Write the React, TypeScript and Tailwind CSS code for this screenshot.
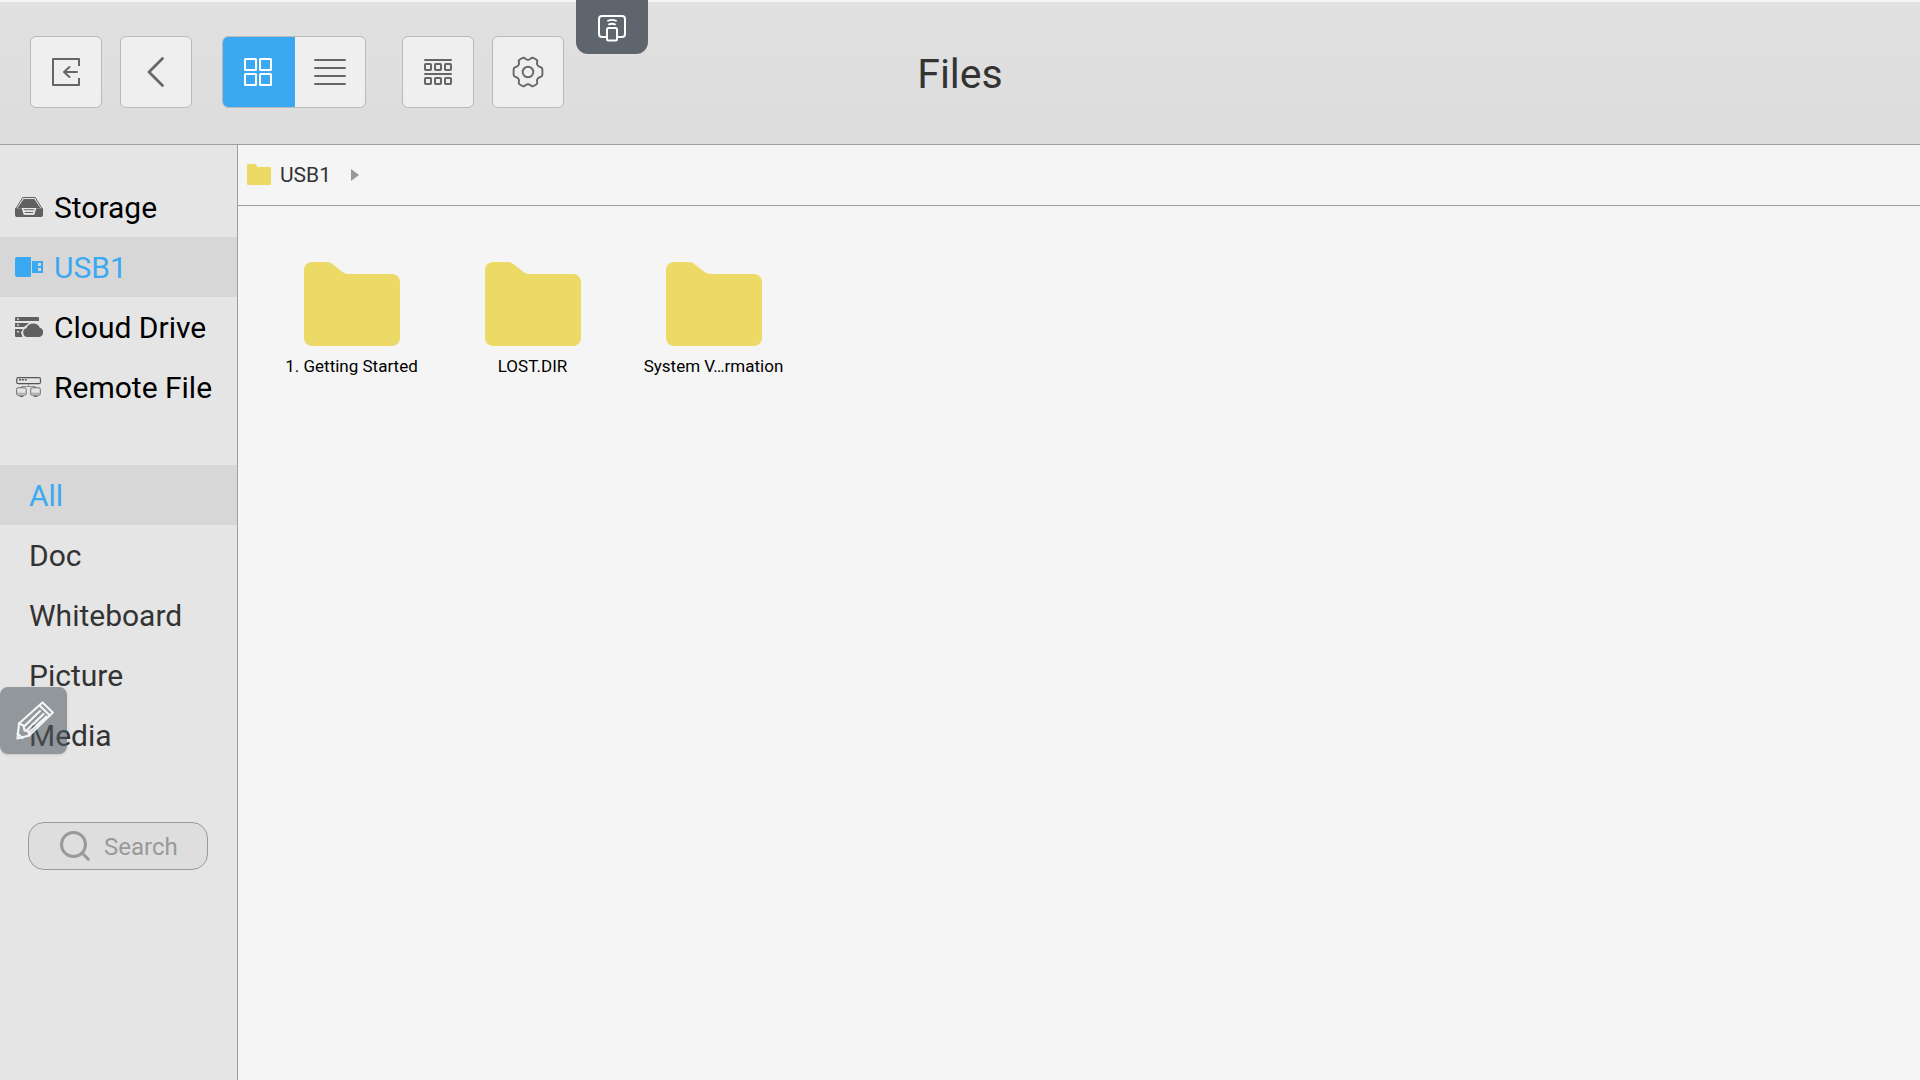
import React, { useState } from "react";

const toolButton =
  "flex size-[72px] items-center justify-center rounded-md border border-[#bababa] bg-[#efefef] text-[#666666]";

function ExitIcon() {
  return (
    <svg width="30" height="30" viewBox="0 0 30 30" fill="none" stroke="currentColor" strokeWidth="2" strokeLinecap="round" strokeLinejoin="round" aria-hidden="true">
      <path d="M28 9V2H2v26h26v-7" strokeLinecap="butt" />
      <path d="M26 15H13M18.500 10L13 15l5.500 5" />
    </svg>
  );
}

function BackIcon() {
  return (
    <svg width="18" height="32" viewBox="0 0 18 32" fill="none" stroke="currentColor" strokeWidth="2.800" strokeLinecap="round" strokeLinejoin="round" aria-hidden="true">
      <path d="M15.500 2.500L2 16 15.500 29.500" />
    </svg>
  );
}

function GridIcon() {
  return (
    <svg width="28" height="28" viewBox="0 0 28 28" fill="none" stroke="currentColor" strokeWidth="2" aria-hidden="true">
      <rect x="1" y="1" width="11" height="11" rx="0.500" />
      <rect x="16" y="1" width="11" height="11" rx="0.500" />
      <rect x="1" y="16" width="11" height="11" rx="0.500" />
      <rect x="16" y="16" width="11" height="11" rx="0.500" />
    </svg>
  );
}

function ListIcon() {
  return (
    <svg width="32" height="26" viewBox="0 0 32 26" fill="currentColor" aria-hidden="true">
      <rect y="0" width="32" height="2" rx="1" />
      <rect y="8" width="32" height="2" rx="1" />
      <rect y="16" width="32" height="2" rx="1" />
      <rect y="24" width="32" height="2" rx="1" />
    </svg>
  );
}

function GroupIcon() {
  return (
    <svg width="28" height="26" viewBox="0 0 28 26" fill="none" stroke="currentColor" strokeWidth="2" aria-hidden="true">
      <path d="M1 1h26M1 15h26" strokeLinecap="round" />
      {[5, 19].map((y) =>
        [1, 11, 21].map((x) => <rect key={`${x}-${y}`} x={x} y={y} width="6" height="6" rx="0.800" />),
      )}
    </svg>
  );
}

function GearIcon() {
  return (
    <svg width="32" height="32" viewBox="0 0 32 32" fill="none" stroke="currentColor" strokeWidth="1.900" strokeLinejoin="round" aria-hidden="true">
      <circle cx="16" cy="16" r="5.300" />
      <path d="M13.300 2.600C14.200 4.200 17.800 4.200 18.700 2.600Q20.100 1 22 2.200L24.200 3.500Q25.800 4.500 25.100 6.200C24.500 8 26 10.800 28.300 11Q30.100 11.400 30.400 13.200V18.800Q30.100 20.600 28.300 21C26 21.200 24.500 24 25.100 25.800Q25.800 27.500 24.200 28.500L22 29.800Q20.100 31 18.700 29.400C17.800 27.800 14.200 27.800 13.300 29.400Q11.900 31 10 29.800L7.800 28.500Q6.200 27.500 6.900 25.800C7.500 24 6 21.200 3.700 21Q1.900 20.600 1.600 18.800V13.200Q1.900 11.400 3.700 11C6 10.800 7.500 8 6.900 6.200Q6.200 4.500 7.800 3.500L10 2.200Q11.900 1 13.300 2.600Z" />
    </svg>
  );
}

function CastIcon() {
  return (
    <svg width="28" height="27" viewBox="0 0 28 27" fill="none" stroke="white" strokeWidth="2" strokeLinecap="round" aria-hidden="true">
      <path d="M8 22H4a3 3 0 0 1-3-3V4a3 3 0 0 1 3-3h20a3 3 0 0 1 3 3v15a3 3 0 0 1-3 3h-4" />
      <path d="M10 5.700Q14 3.900 18 5.700M11 9.400Q14 8.100 17 9.400" strokeWidth="1.800" />
      <rect x="9" y="13" width="10" height="12.500" rx="1.500" />
    </svg>
  );
}

function StorageIcon() {
  return (
    <svg width="28" height="20" viewBox="0 0 28 20" aria-hidden="true">
      <path d="M7.700 0.500h12.600L27.300 12M7.700 0.500L0.700 12" fill="none" stroke="#606060" strokeWidth="1" />
      <path d="M8.600 2h10.800l6 9H2.600z" fill="#606060" />
      <path d="M0 11.200h6.700l2 6.600h10.600l2-6.600H28V18a2 2 0 0 1-2 2H2a2 2 0 0 1-2-2z" fill="#606060" />
      <path d="M7.200 11.200h13.600l-2 6.300H9.200z" fill="#ececec" />
      <path d="M8.700 12.700h10.600M9.700 15.500h8.600" stroke="#606060" strokeWidth="1.100" />
    </svg>
  );
}

function UsbIcon() {
  return (
    <svg width="28" height="20" viewBox="0 0 28 20" fill="#3ba9f1" aria-hidden="true">
      <path d="M2 0h14v20H2a2 2 0 0 1-2-2V2a2 2 0 0 1 2-2z" />
      <path fillRule="evenodd" d="M17 4h11v12H17zM23 6v3h3V6zM23 11v3h3v-3z" />
    </svg>
  );
}

function CloudDriveIcon() {
  return (
    <svg width="28" height="20" viewBox="0 0 28 20" fill="#606060" aria-hidden="true">
      <path fillRule="evenodd" d="M1 0h22q1 0 1 1v3H0V1q0-1 1-1zM2 1.300v1.400h1.800V1.300z" />
      <path fillRule="evenodd" d="M0 6h14l-3 2.500L9 10H0zM2 7.300v1.400h1.800V7.300z" />
      <path fillRule="evenodd" d="M0 12h8L6 15.500 7.500 20H1q-1 0-1-1zM2 14v1.400h1.800V14z" />
      <path d="M12.500 20a4.600 4.600 0 0 1-1-9 7.300 7.300 0 0 1 13.300-.2A4.700 4.700 0 0 1 23.500 20z" />
    </svg>
  );
}

function RemoteIcon() {
  return (
    <svg width="28" height="20" viewBox="0 0 28 20" fill="none" stroke="#6d6d6d" aria-hidden="true">
      <rect x="1.700" y="0.700" width="23.800" height="6" rx="1.800" stroke="#555555" strokeWidth="1.200" />
      <path d="M4 2.800h2M6.900 2.800h2M9.800 2.800h2" stroke="#555555" strokeWidth="1.500" />
      <path d="M13.600 7v2.500M6.500 11V9.500h14V11" strokeWidth="1" stroke="#909090" />
      <rect x="1.600" y="10.800" width="9.600" height="7.400" rx="1.500" />
      <rect x="15.700" y="10.800" width="9.600" height="7.400" rx="1.500" />
      <path d="M2 16.300h9M16 16.300h9" stroke="#a0a0a0" />
      <path d="M4.500 19.300h4M18.600 19.300h4" strokeWidth="1.200" />
    </svg>
  );
}

function FolderIcon() {
  return (
    <svg width="96" height="84" viewBox="0 0 96 84" fill="#ecd966" aria-hidden="true">
      <path d="M8 0H23Q26 0 28 1.700L38.500 10Q41 12 44 12H88A8 8 0 0 1 96 20V76A8 8 0 0 1 88 84H8A8 8 0 0 1 0 76V8A8 8 0 0 1 8 0Z" />
    </svg>
  );
}

function SmallFolderIcon() {
  return (
    <svg width="24" height="21" viewBox="0 0 24 21" fill="#ecd966" aria-hidden="true">
      <path d="M1 0H7.500Q8.300 0 9 .7L11 3H23Q24 3 24 4V20Q24 21 23 21H1Q0 21 0 20V1Q0 0 1 0Z" />
    </svg>
  );
}

function PencilIcon() {
  return (
    <svg width="38" height="39" viewBox="0 0 38 39" fill="none" stroke="white" strokeWidth="2.200" strokeLinecap="round" strokeLinejoin="round" opacity="0.9" aria-hidden="true">
      <path d="M1.500 37.500L3 22.500 26.500 1.500 36.800 11.500 13.200 34.500z" />
      <path d="M3 22.500l4.500 2 1 5 4 1 .7 4M1.500 32.500l5 4.500" />
      <path d="M23.500 4.500L34 14.500M8.500 25L24 10M11 29L27.500 13M13.500 31L30.500 15.500" />
    </svg>
  );
}

function SearchIcon() {
  return (
    <svg width="30" height="30" viewBox="0 0 30 30" fill="none" stroke="#999999" strokeWidth="3" strokeLinecap="round" aria-hidden="true">
      <circle cx="13.500" cy="13.500" r="12" />
      <path d="M22.300 22.300L28.300 28.300" />
    </svg>
  );
}

const places = [
  { name: "Storage", icon: <StorageIcon /> },
  { name: "USB1", icon: <UsbIcon /> },
  { name: "Cloud Drive", icon: <CloudDriveIcon /> },
  { name: "Remote File", icon: <RemoteIcon /> },
];
const filters = ["All", "Doc", "Whiteboard", "Picture", "Media"];
const folders = ["1. Getting Started", "LOST.DIR", "System V…rmation"];

export default function App() {
  const [place, setPlace] = useState("USB1");
  const [filter, setFilter] = useState("All");

  return (
    <div className="relative flex min-h-screen flex-col bg-[#f5f5f5] pt-0.5 font-['Roboto',sans-serif]">
      <header className="grid grid-cols-[1fr_auto_1fr] items-center border-b border-[#9f9f9f] bg-linear-to-b from-[#e1e1e1] to-[#dcdcdc] px-[30px] pt-[34px] pb-9">
        <div className="flex items-center">
          <button className={toolButton} aria-label="Exit"><ExitIcon /></button>
          <button className={`${toolButton} ml-[18px]`} aria-label="Back"><BackIcon /></button>
          <div className="ml-[30px] flex h-[72px] w-36 overflow-hidden rounded-md border border-[#bababa] bg-[#efefef]">
            <button className="flex flex-1 items-center justify-center bg-[#3ba9f1] pr-px text-white" aria-label="Grid view"><GridIcon /></button>
            <button className="flex flex-1 items-center justify-center text-[#666666]" aria-label="List view"><ListIcon /></button>
          </div>
          <button className={`${toolButton} ml-9`} aria-label="Group"><GroupIcon /></button>
          <button className={`${toolButton} ml-[18px]`} aria-label="Settings"><GearIcon /></button>
        </div>
        <h1 className="pt-1 text-[41px] leading-[68px] text-[#333333]">Files</h1>
      </header>

      <button className="absolute top-0 left-[576px] flex h-[54px] w-[72px] items-center justify-center rounded-b-xl bg-[#5f656d] pt-0.5" aria-label="Screen share">
        <CastIcon />
      </button>

      <div className="flex flex-1">
        <aside className="w-[238px] shrink-0 border-r border-[#9f9f9f] bg-[#e5e5e5] pt-8">
          <nav aria-label="Places">
            {places.map((p) => (
              <button
                key={p.name}
                onClick={() => setPlace(p.name)}
                className={`flex h-[60px] w-full items-center gap-[11px] pl-[15px] text-3xl ${p.name === place ? "bg-[#d7d7d7] text-[#3ba9f1]" : "text-black"}`}
              >
                {p.icon}
                <span className="pt-0.5">{p.name}</span>
              </button>
            ))}
          </nav>
          <nav className="mt-12" aria-label="File types">
            {filters.map((f) => (
              <button
                key={f}
                onClick={() => setFilter(f)}
                className={`flex h-[60px] w-full items-center pt-0.5 pl-[29px] text-3xl ${f === filter ? "bg-[#d7d7d7] text-[#3ba9f1]" : "text-[#333333]"}`}
              >
                {f}
              </button>
            ))}
          </nav>
          <label className="mt-[57px] mr-[29px] ml-7 flex h-12 items-center gap-3.5 rounded-2xl border border-[#999999] bg-[#dedede] pl-[31px]">
            <SearchIcon />
            <input type="text" aria-label="Search" placeholder="Search" className="w-20 bg-transparent pt-0.5 text-2xl text-[#333333] outline-none placeholder:text-[#999999]" />
          </label>
        </aside>

        <main className="min-w-0 flex-1">
          <div className="flex h-[61px] items-center border-b border-[#9f9f9f] pl-[9px]">
            <div className="pb-0.5"><SmallFolderIcon /></div>
            <a href="#usb1" className="ml-[9px] pt-0.5 text-[21px] text-[#333333]">USB1</a>
            <svg width="8" height="12" viewBox="0 0 8 12" fill="#999999" className="ml-5" aria-hidden="true">
              <path d="M0 0L8 6 0 12z" />
            </svg>
          </div>
          <ul className="flex flex-wrap pt-14 pl-[23px]">
            {folders.map((name) => (
              <li key={name} className="w-[181px]">
                <button className="flex w-full flex-col items-center gap-2 text-[17px] leading-6 text-black">
                  <FolderIcon />
                  {name}
                </button>
              </li>
            ))}
          </ul>
        </main>
      </div>

      <button className="absolute top-[687px] left-0 flex size-[67px] items-center justify-center rounded-lg bg-[#4f5a61]/56 pl-0.5 shadow-sm" aria-label="Annotate">
        <PencilIcon />
      </button>
    </div>
  );
}
